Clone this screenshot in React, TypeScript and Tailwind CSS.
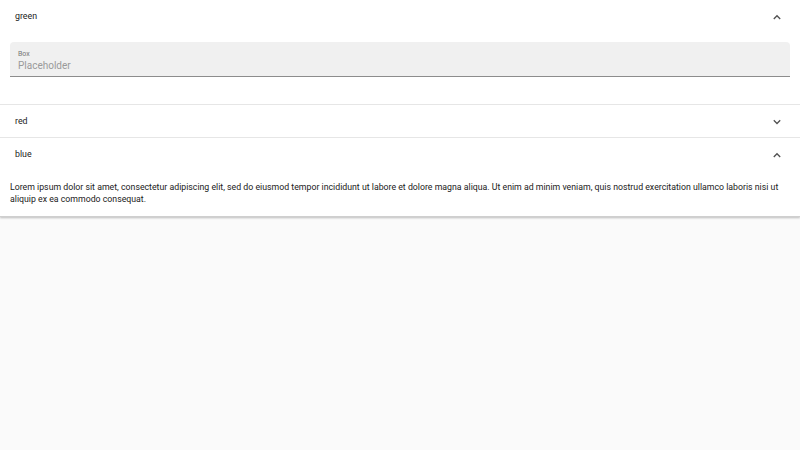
import React from "react";

const Up = () => (
  <svg width="12" height="12" viewBox="0 0 24 24" fill="none" stroke="#505050" strokeWidth="2.6" strokeLinecap="square">
    <path d="M6.5 15l5.5-5.5 5.5 5.5" />
  </svg>
);
const Down = () => (
  <svg width="12" height="12" viewBox="0 0 24 24" fill="none" stroke="#505050" strokeWidth="2.6" strokeLinecap="square">
    <path d="M6.5 9.5l5.5 5.5 5.5-5.5" />
  </svg>
);

function Header({ label, open }: { label: string; open: boolean }) {
  return (
    <div className="flex h-[32px] items-center justify-between pl-[15px] pr-[17px] pt-[1px] text-[8.8px] text-[#212121]">
      <span>{label}</span>
      {open ? <Up /> : <Down />}
    </div>
  );
}

export default function App() {
  return (
    <div className="min-h-[450px] w-full bg-[#fafafa]" style={{ fontFamily: "Roboto, 'Liberation Sans', sans-serif" }}>
      <div className="bg-white shadow-[0_1px_2px_rgba(0,0,0,0.25)] border-b border-[#cfcfcf]">
        <div className="border-b border-[#e6e6e6]">
          <Header label="green" open />
          <div className="px-[10px] pt-[10px] pb-[27px]">
            <div className="h-[35px] rounded-t-[4px] bg-[#f0f0f0] border-b border-[#8c8c8c] px-[8px] pt-[7px]">
              <div className="text-[7px] leading-[10px] text-[#777]">Box</div>
              <div className="text-[10px] leading-[14px] text-[#9a9a9a]">Placeholder</div>
            </div>
          </div>
        </div>
        <div className="border-b border-[#e6e6e6]">
          <Header label="red" open={false} />
        </div>
        <div>
          <Header label="blue" open />
          <p className="px-[10px] pt-[11px] pb-[11px] text-[8.75px] leading-[12px] text-[#212121]">
            Lorem ipsum dolor sit amet, consectetur adipiscing elit, sed do eiusmod tempor incididunt ut labore et dolore magna aliqua. Ut enim ad minim veniam, quis nostrud exercitation ullamco laboris nisi ut aliquip ex ea commodo consequat.
          </p>
        </div>
      </div>
    </div>
  );
}
